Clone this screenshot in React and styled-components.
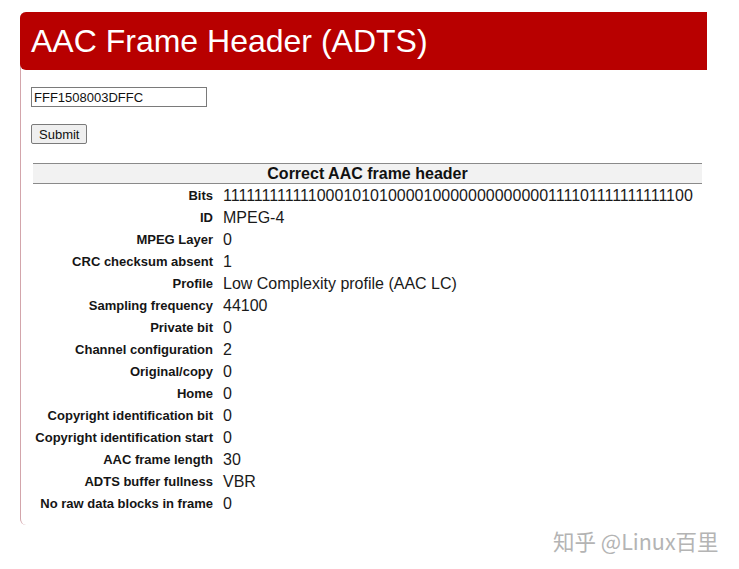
import React from "react";
import styled, { createGlobalStyle } from "styled-components";

const GlobalStyle = createGlobalStyle`
  html, body {
    margin: 0;
    background: #fff;
  }
  body {
    font-family: "Liberation Sans", Arial, sans-serif;
    color: #1a1a1a;
  }
`;

const rows = [
  ["Bits", "11111111111100010101000010000000000000111101111111111100"],
  ["ID", "MPEG-4"],
  ["MPEG Layer", "0"],
  ["CRC checksum absent", "1"],
  ["Profile", "Low Complexity profile (AAC LC)"],
  ["Sampling frequency", "44100"],
  ["Private bit", "0"],
  ["Channel configuration", "2"],
  ["Original/copy", "0"],
  ["Home", "0"],
  ["Copyright identification bit", "0"],
  ["Copyright identification start", "0"],
  ["AAC frame length", "30"],
  ["ADTS buffer fullness", "VBR"],
  ["No raw data blocks in frame", "0"],
];

const App = () => {
  return (
    <Page>
      <GlobalStyle />
      <Card>
        <Title>AAC Frame Header (ADTS)</Title>
        <Body>
          <HexInput defaultValue="FFF1508003DFFC" />
          <SubmitButton>Submit</SubmitButton>
          <Table>
            <Caption>Correct AAC frame header</Caption>
            {rows.map(([label, value]) => (
              <React.Fragment key={label}>
                <Label>{label}</Label>
                <Value>{value}</Value>
              </React.Fragment>
            ))}
          </Table>
        </Body>
      </Card>
      <Watermark>知乎 @Linux百里</Watermark>
    </Page>
  );
};

const Page = styled.div`
  position: relative;
  width: 739px;
  height: 569px;
  padding: 12px 0 0 20px;
  box-sizing: border-box;
`;

const Card = styled.div`
  width: 687px;
  border-left: 1px solid #d3a5ab;
  border-bottom-left-radius: 6px;
  border-top-left-radius: 6px;
  box-sizing: border-box;
`;

const Title = styled.h1`
  margin: 0 0 0 -1px;
  height: 58px;
  line-height: 58px;
  padding-left: 11px;
  background: #b80000;
  color: #fff;
  font-size: 32px;
  font-weight: normal;
  border-radius: 6px 0 0 6px;
`;

const Body = styled.div`
  display: flex;
  flex-direction: column;
  align-items: flex-start;
  padding: 17px 5px 10px 10px;
`;

const HexInput = styled.input`
  width: 176px;
  height: 20px;
  box-sizing: border-box;
  border: 1px solid #7a7a7a;
  padding: 0 2px;
  font-family: "Liberation Sans", Arial, sans-serif;
  font-size: 13px;
  color: #111;
  outline: none;
`;

const SubmitButton = styled.button`
  margin-top: 17px;
  height: 20px;
  padding: 0 7px;
  background: #efefef;
  border: 1px solid #7a7a7a;
  border-radius: 2px;
  font-family: "Liberation Sans", Arial, sans-serif;
  font-size: 13px;
  color: #111;
`;

const Table = styled.div`
  margin: 19px 0 0 2px;
  width: 669px;
  display: grid;
  grid-template-columns: 184px 1fr;
  grid-auto-rows: 22px;
`;

const Caption = styled.div`
  grid-column: 1 / -1;
  height: 21px;
  line-height: 19px;
  box-sizing: border-box;
  border-top: 1px solid #8a8a8a;
  border-bottom: 1px solid #8a8a8a;
  background: #f2f2f2;
  text-align: center;
  font-weight: bold;
  font-size: 16px;
  color: #111;
`;

const Label = styled.div`
  text-align: right;
  padding-right: 4px;
  font-weight: bold;
  font-size: 13px;
  line-height: 22px;
  color: #151515;
  white-space: nowrap;
`;

const Value = styled.div`
  padding-left: 6px;
  font-size: 16px;
  line-height: 22px;
  color: #1a1a1a;
  white-space: nowrap;
`;

const Watermark = styled.div`
  position: absolute;
  left: 553px;
  top: 525px;
  font-family: "Noto Sans CJK SC", "Liberation Sans", sans-serif;
  font-size: 21.5px;
  color: #b4b4b4;
  white-space: nowrap;
`;

export default App;
